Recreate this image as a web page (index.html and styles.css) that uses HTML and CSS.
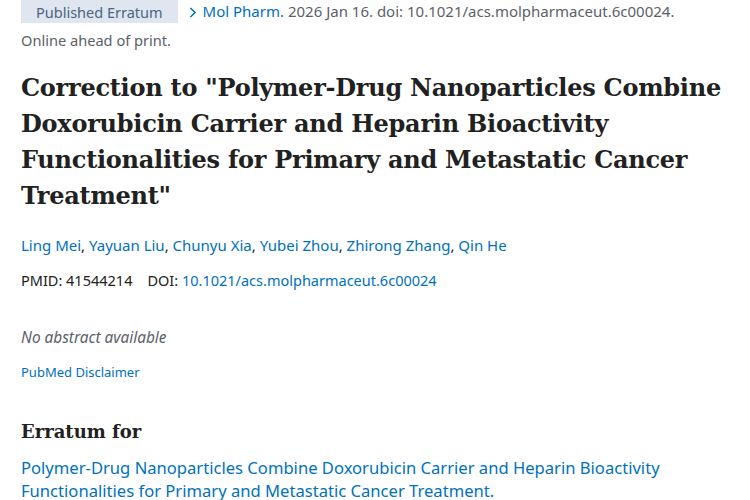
FILE: index.html
```html
<!DOCTYPE html>
<html>
<head>
<meta charset="utf-8">
<link rel="stylesheet" href="styles.css">
</head>
<body>
<main class="page">
  <div class="cite-row">
    <span class="badge">Published Erratum</span>
    <span class="journal"><svg class="chev" width="8" height="11" viewBox="0 0 8 11"><path d="M1.5 1 L6 5.5 L1.5 10" fill="none" stroke="#0071bc" stroke-width="1.5"/></svg><span><a class="lnk">Mol Pharm.</a> <span class="gray">2026 Jan 16. doi: 10.1021/acs.molpharmaceut.6c00024.</span></span></span>
  </div>
  <div class="ahead">Online ahead of print.</div>
  <h1 class="title">Correction to "Polymer-Drug Nanoparticles Combine Doxorubicin Carrier and Heparin Bioactivity Functionalities for Primary and Metastatic Cancer Treatment"</h1>
  <div class="authors"><a class="lnk">Ling Mei</a>, <a class="lnk">Yayuan Liu</a>, <a class="lnk">Chunyu Xia</a>, <a class="lnk">Yubei Zhou</a>, <a class="lnk">Zhirong Zhang</a>, <a class="lnk">Qin He</a></div>
  <div class="ids"><span>PMID: 41544214</span><span>DOI: <a class="lnk">10.1021/acs.molpharmaceut.6c00024</a></span></div>
  <div class="noabs">No abstract available</div>
  <div class="disc"><a class="lnk">PubMed Disclaimer</a></div>
  <h2 class="sub">Erratum for</h2>
  <div class="erratum"><a class="lnk">Polymer-Drug Nanoparticles Combine Doxorubicin Carrier and Heparin Bioactivity Functionalities for Primary and Metastatic Cancer Treatment.</a></div>
</main>
</body>
</html>
```
FILE: styles.css
```css
html, body { margin: 0; padding: 0; background: #fff; }
body { font-family: "Noto Sans", "Open Sans", sans-serif; color: #212121; }
.page { padding: 0 0 0 21px; width: 730px; box-sizing: border-box; }
.lnk { color: #0071bc; text-decoration: none; }
.gray { color: #5b616b; }
.cite-row { display: flex; align-items: center; height: 23px; }
.badge { background: #dfe6ef; color: #4b6584; font-size: 14.5px; height: 23px; line-height: 25px; padding: 0 15px; box-sizing: border-box; }
.journal { margin-left: 11px; line-height: 25px; font-size: 15px; display: flex; align-items: center; white-space: nowrap; }
.chev { margin: 2px 6px 0 0; flex: none; }
.ahead { color: #5b616b; font-size: 14.6px; margin-top: 7px; line-height: 20px; }
.title { font-family: "DejaVu Serif", serif; font-weight: bold; font-size: 24px; letter-spacing: -0.25px; line-height: 36px; margin: 20px 0 0; color: #212121; }
.authors { font-size: 15px; margin-top: 21px; line-height: 20px; }
.ids { font-size: 14.5px; margin-top: 15px; line-height: 20px; display: flex; gap: 15px; }
.noabs { font-style: italic; font-size: 15.4px; color: #5b616b; margin-top: 38px; line-height: 20px; }
.disc { font-size: 13px; margin-top: 14px; line-height: 20px; }
.sub { font-family: "DejaVu Serif", serif; font-weight: bold; font-size: 18px; margin: 36px 0 0; line-height: 28px; }
.erratum { font-size: 16.6px; line-height: 23px; margin-top: 10px; width: 690px; }
```
